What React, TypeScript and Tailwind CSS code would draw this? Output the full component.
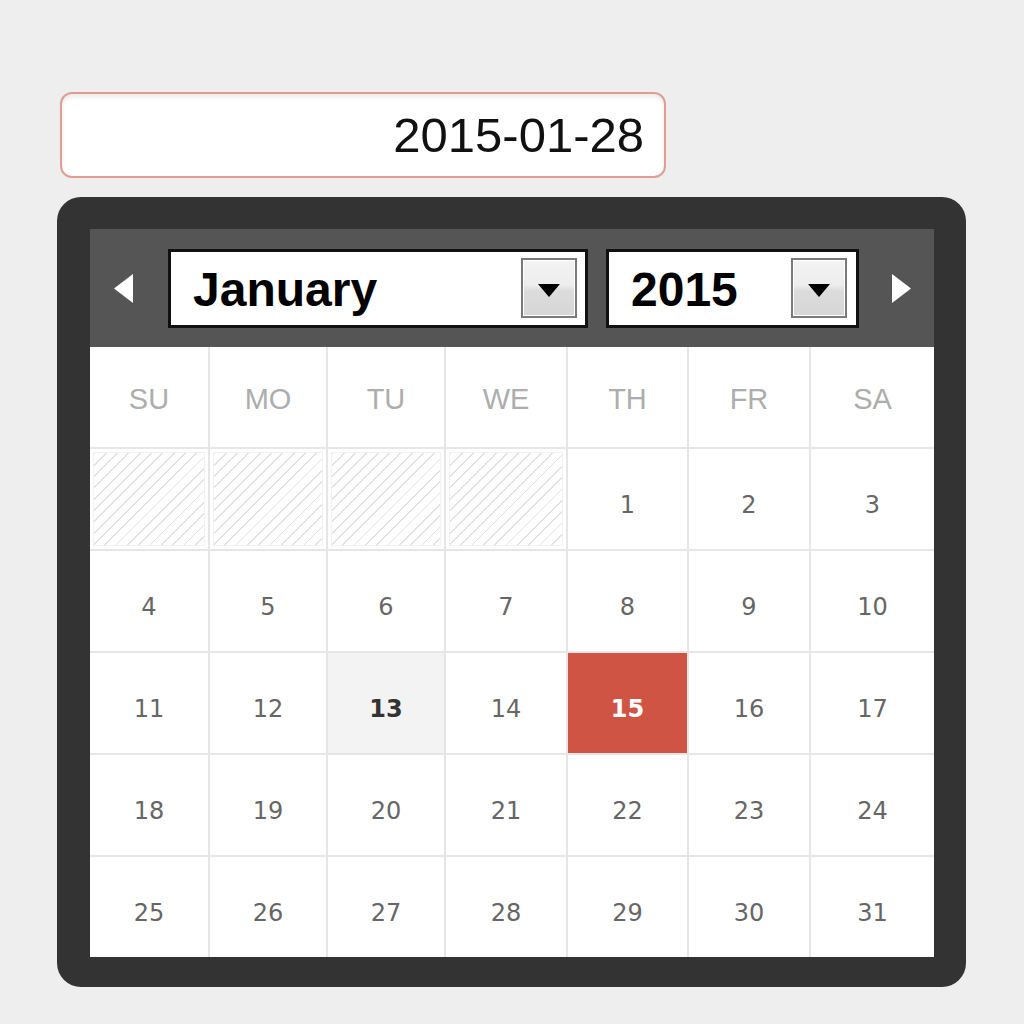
const days: (number | null)[] = [null, null, null, null, ...Array.from({ length: 31 }, (_, i) => i + 1)];
const weekdays = ["SU", "MO", "TU", "WE", "TH", "FR", "SA"];

const DropButton = () => (
    <div className="flex h-[60px] w-[56px] items-center justify-center border-2 border-[#7a7a7a] bg-white p-px">
        <div className="flex h-full w-full items-center justify-center bg-[linear-gradient(#f3f3f3_0%,#ededed_45%,#dcdcdc_55%,#d6d6d6_100%)] pt-[4px]">
            <svg width="22" height="13" viewBox="0 0 22 13">
                <polygon points="0,0 22,0 11,13" fill="#000" />
            </svg>
        </div>
    </div>
);

const DayCell = ({ day }: { day: number | null }) => {
    if (day === null) {
        return (
            <div className="bg-white p-[3px]">
                <div className="h-full w-full border border-[#f2f2f2] bg-[repeating-linear-gradient(135deg,#e2e2e2_0px,#e2e2e2_1.3px,transparent_1.3px,transparent_8px)]" />
            </div>
        );
    }
    if (day === 15) {
        return (
            <div className="flex items-center justify-center bg-[#d05444] pt-[12px] text-[24px] font-bold text-white">
                {day}
            </div>
        );
    }
    if (day === 13) {
        return (
            <div className="flex items-center justify-center bg-[#f3f3f3] pt-[12px] text-[24px] font-bold text-[#333]">
                {day}
            </div>
        );
    }
    return (
        <div className="flex items-center justify-center bg-white pt-[12px] text-[24px] text-[#666]">
            {day}
        </div>
    );
};

const App = () => {
    return (
        <div className="min-h-screen w-full bg-[#eeeeee] pt-[92px] pl-[57px] font-['Liberation_Sans',Arial,sans-serif]">
            <div className="ml-[3px] flex h-[86px] w-[606px] items-center justify-end rounded-[12px] border-2 border-[#df9d94] bg-white pr-[20px] shadow-[inset_0_3px_4px_rgba(0,0,0,0.08)]">
                <span className="text-[49px] leading-none text-[#111]">2015-01-28</span>
            </div>

            <div className="mt-[19px] w-[909px] rounded-[24px] bg-[#333333] pt-[32px] pr-[32px] pb-[30px] pl-[33px]">
                <div className="flex h-[118px] items-center bg-[#555555]">
                    <div className="flex w-[78px] justify-center pr-[12px]">
                        <svg width="19" height="29" viewBox="0 0 19 29">
                            <polygon points="19,0 19,29 0,14.5" fill="#fff" />
                        </svg>
                    </div>
                    <div className="flex h-[79px] w-[420px] items-center justify-between border-[3px] border-[#111] bg-white pr-[8px] pl-[22px]">
                        <span className="pt-[4px] text-[48px] leading-none font-bold text-black">January</span>
                        <DropButton />
                    </div>
                    <div className="w-[18px]" />
                    <div className="flex h-[79px] w-[253px] items-center justify-between border-[3px] border-[#111] bg-white pr-[9px] pl-[22px]">
                        <span className="pt-[4px] text-[48px] leading-none font-bold text-black">2015</span>
                        <DropButton />
                    </div>
                    <div className="flex flex-1 justify-center pl-[10px]">
                        <svg width="19" height="29" viewBox="0 0 19 29">
                            <polygon points="0,0 0,29 19,14.5" fill="#fff" />
                        </svg>
                    </div>
                </div>

                <div className="grid h-[610px] grid-cols-[118px_116px_116px_120px_119px_120px_123px] grid-rows-6 gap-[2px] bg-[#e6e6e6] font-['DejaVu_Sans',Verdana,sans-serif]">
                    {weekdays.map((w) => (
                        <div
                            key={w}
                            className="flex items-center justify-center bg-white pt-[6px] font-['Liberation_Sans',Arial,sans-serif] text-[29px] text-[#adadad]"
                        >
                            {w}
                        </div>
                    ))}
                    {days.map((d, i) => (
                        <DayCell key={i} day={d} />
                    ))}
                </div>
            </div>
        </div>
    );
};

export default App;
